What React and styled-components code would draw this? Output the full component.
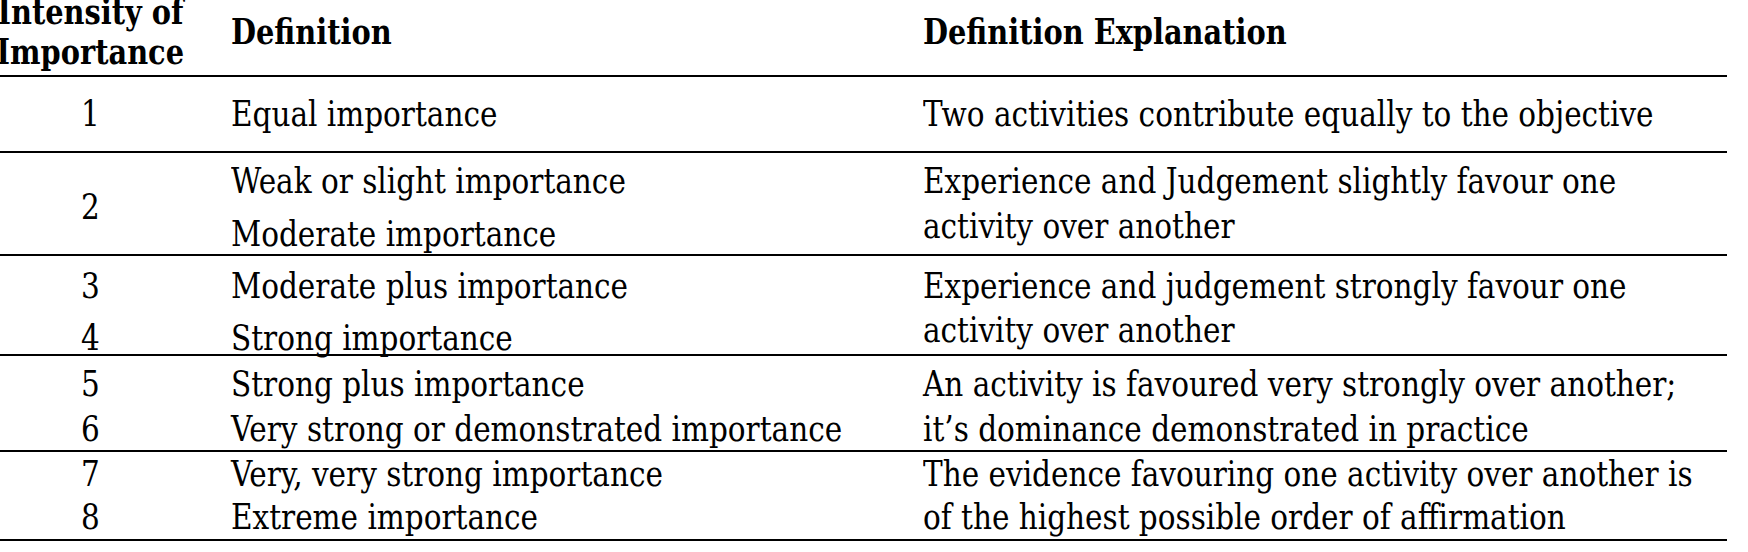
import React from "react";
import styled, { createGlobalStyle } from "styled-components";

const Global = createGlobalStyle`
  body {
    margin: 0;
    background: #fff;
    color: #000;
    font-family: "DejaVu Serif Condensed", "DejaVu Serif", serif;
    font-stretch: condensed;
    overflow: hidden;
  }
`;

// first = centre of the first line, measured from the top of the row
const rows = [
  {
    nums: ["1"],
    defs: ["Equal importance"],
    expl: ["Two activities contribute equally to the objective"],
    height: 74,
    first: 40,
    defLh: 46,
    explLh: 46,
  },
  {
    nums: ["2"],
    numFirst: 56,
    defs: ["Weak or slight importance", "Moderate importance"],
    expl: ["Experience and Judgement slightly favour one", "activity over another"],
    height: 101,
    first: 30,
    defLh: 53,
    explLh: 45,
  },
  {
    nums: ["3", "4"],
    defs: ["Moderate plus importance", "Strong importance"],
    expl: ["Experience and judgement strongly favour one", "activity over another"],
    height: 98,
    first: 33,
    defLh: 52,
    explLh: 44,
  },
  {
    nums: ["5", "6"],
    defs: ["Strong plus importance", "Very strong or demonstrated importance"],
    expl: ["An activity is favoured very strongly over another;", "it\u2019s dominance demonstrated in practice"],
    height: 94,
    first: 30,
    defLh: 45,
    explLh: 45,
  },
  {
    nums: ["7", "8"],
    defs: ["Very, very strong importance", "Extreme importance"],
    expl: ["The evidence favouring one activity over another is", "of the highest possible order of affirmation"],
    height: 87,
    first: 22,
    defLh: 43,
    explLh: 43,
  },
];

const topFor = (first, lh) => first - lh / 2 - 3;

const App = () => {
  return (
    <>
      <Global />
      <Table>
        <HeadRow>
          <HeadCell center>
            <Line bold center>Intensity of</Line>
            <Line bold center>Importance</Line>
          </HeadCell>
          <HeadCell>
            <Line bold>Definition</Line>
          </HeadCell>
          <HeadCell>
            <Line bold>Definition Explanation</Line>
          </HeadCell>
        </HeadRow>
        {rows.map((r, i) => (
          <Row key={i} h={r.height}>
            <Cell center lh={r.defLh} top={topFor(r.numFirst || r.first, r.defLh)}>
              {r.nums.map((n) => (
                <Line center key={n}>{n}</Line>
              ))}
            </Cell>
            <Cell lh={r.defLh} top={topFor(r.first, r.defLh)}>
              {r.defs.map((d) => (
                <Line key={d}>{d}</Line>
              ))}
            </Cell>
            <Cell lh={r.explLh} top={topFor(r.first, r.explLh)}>
              {r.expl.map((e) => (
                <Line key={e}>{e}</Line>
              ))}
            </Cell>
          </Row>
        ))}
      </Table>
    </>
  );
};

export default App;

const Table = styled.div`
  width: 1727px;
  display: flex;
  flex-direction: column;
`;

const HeadRow = styled.div`
  display: grid;
  grid-template-columns: 180px 692px 1fr;
  align-items: start;
  height: 75px;
  border-bottom: 2px solid #000;
`;

const HeadCell = styled.div`
  font-weight: 700;
  font-size: 36px;
  line-height: 40px;
  display: flex;
  flex-direction: column;
  align-items: ${({ center }) => (center ? "center" : "flex-start")};
  margin-top: ${({ center }) => (center ? "-9px" : "0")};
  padding-top: ${({ center }) => (center ? "0" : "11px")};
  padding-left: ${({ center }) => (center ? "0" : "51px")};
`;

const Row = styled.div`
  display: grid;
  grid-template-columns: 180px 692px 1fr;
  height: ${({ h }) => h}px;
  align-items: start;
  border-bottom: 2px solid #000;
`;

const Cell = styled.div`
  font-size: 36px;
  line-height: ${({ lh }) => lh}px;
  display: flex;
  flex-direction: column;
  align-items: ${({ center }) => (center ? "center" : "flex-start")};
  padding-top: ${({ top }) => top}px;
  padding-left: ${({ center }) => (center ? "0" : "51px")};
`;

const Line = styled.div`
  white-space: nowrap;
  width: max-content;
  transform: scaleX(${({ bold }) => (bold ? 0.89 : 0.911)});
  transform-origin: ${({ center }) => (center ? "center" : "left")} center;
`;
